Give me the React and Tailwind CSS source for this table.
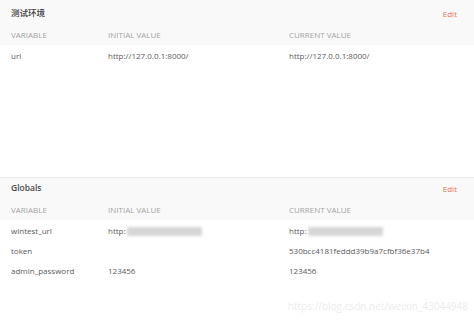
import React from 'react';

const font = { fontFamily: '"Open Sans", "Noto Sans CJK SC", sans-serif' };

const Blur = ({ w }) => (
  <span className={`inline-block h-[9px] ${w} bg-[#d6d6d6] blur-[1.5px] align-middle ml-[1px]`} />
);

const Section = ({ title, titleClass, rows, height, titlePad }) => (
  <div className={`${height} flex flex-col`}>
    <div className="bg-[#f9f9f9]">
      <div className={`${titlePad} flex items-center justify-between pl-[11px] pr-[17px]`}>
        <span className={titleClass}>{title}</span>
        <span className="text-[8px] text-[#e8704c]">Edit</span>
      </div>
      <div className="h-[21px] pt-[1px] grid grid-cols-[97px_181px_1fr] items-center pl-[11px] text-[8px] text-[#a3a3a3]">
        <span>VARIABLE</span>
        <span>INITIAL VALUE</span>
        <span>CURRENT VALUE</span>
      </div>
    </div>
    <div className="pt-[1px]">
      {rows.map((r, i) => (
        <div key={i} className="h-[20px] grid grid-cols-[97px_181px_1fr] items-center pl-[11px] text-[8px] text-[#5a5a5a]">
          <span>{r[0]}</span>
          <span>{r[1]}</span>
          <span>{r[2]}</span>
        </div>
      ))}
    </div>
  </div>
);

export default function App() {
  return (
    <div className="relative w-[474px] h-[326px] bg-white overflow-hidden" style={font}>
      <Section
        title="测试环境"
        titleClass="text-[8.5px] font-medium text-[#3a3a3a]"
        height="h-[177px]"
        titlePad="pt-[3px] h-[24px]"
        rows={[['url', 'http://127.0.0.1:8000/', 'http://127.0.0.1:8000/']]}
      />
      <div className="border-t border-[#ebebeb]">
        <Section
          title="Globals"
          titleClass="text-[8.5px] font-semibold text-[#4a4a4a]"
          height="h-[148px]"
          titlePad="h-[21px]"
          rows={[
            ['wintest_url', <span>http:<Blur w="w-[75px]" /></span>, <span>http:<Blur w="w-[75px]" /></span>],
            ['token', '', '530bcc4181feddd39b9a7cfbf36e37b4'],
            ['admin_password', '123456', '123456'],
          ]}
        />
      </div>
      <div className="absolute right-[6px] bottom-[12px] text-[10px] text-[#ececec]">
        https://blog.csdn.net/weixin_43044948
      </div>
    </div>
  );
}
